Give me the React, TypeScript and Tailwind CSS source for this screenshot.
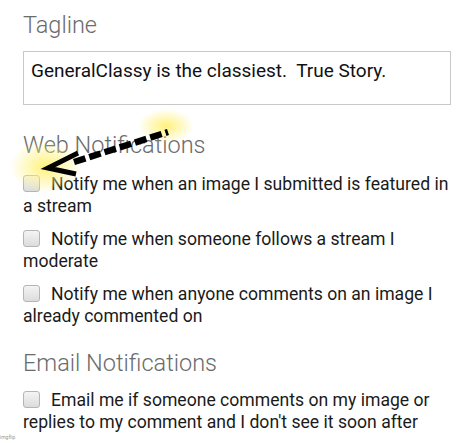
const Checkbox = () => (
    <span className="inline-block align-[-2px] w-[17px] h-[17px] mr-[11px] rounded-[3px] border border-[#b5b5b5] bg-gradient-to-b from-[#f4f4f4] to-[#dcdcdc]"></span>
);

const Option = ({ text }: { text: string }) => (
    <p className="text-[17.6px] leading-[22px] text-[#1a1a1a]">
        <Checkbox />
        {text}
    </p>
);

const Arrow = () => (
    <svg className="absolute left-0 top-0 pointer-events-none" width="474" height="443">
        <defs>
            <radialGradient id="glow">
                <stop offset="0%" stopColor="#fff06a" stopOpacity="0.9" />
                <stop offset="60%" stopColor="#fff27a" stopOpacity="0.4" />
                <stop offset="100%" stopColor="#fff27a" stopOpacity="0" />
            </radialGradient>
        </defs>
        <ellipse cx="46" cy="167" rx="36" ry="26" fill="url(#glow)" />
        <ellipse cx="166" cy="126" rx="28" ry="17" fill="url(#glow)" />
        <line x1="74" y1="162" x2="168" y2="132" stroke="#000" strokeWidth="6.5" strokeDasharray="12 4" />
        <polyline points="78,153 48,168 76,174" fill="none" stroke="#000" strokeWidth="5" strokeLinejoin="miter" />
    </svg>
);

export default function App() {
    return (
        <div className="relative w-[474px] h-[443px] bg-white overflow-hidden font-['Roboto',sans-serif]">
            <div className="px-[23px] pt-[9px]">
                <h2 className="text-[23.5px] leading-[32px] font-light text-[#6b6b6b]">Tagline</h2>
                <div className="mt-[10px] h-[54px] border border-[#c8c8c8] px-[7px] pt-[5px] text-[19px] text-[#111]">
                    GeneralClassy is the classiest.&nbsp; True Story.
                </div>
                <h2 className="mt-[24px] text-[23.5px] leading-[32px] font-light text-[#6b6b6b]">Web Notifications</h2>
                <div className="mt-[12px] flex flex-col gap-[11px]">
                    <Option text="Notify me when an image I submitted is featured in a stream" />
                    <Option text="Notify me when someone follows a stream I moderate" />
                    <Option text="Notify me when anyone comments on an image I already commented on" />
                </div>
                <h2 className="mt-[20px] text-[23.5px] leading-[32px] font-light text-[#6b6b6b]">Email Notifications</h2>
                <div className="mt-[10px]">
                    <Option text="Email me if someone comments on my image or replies to my comment and I don't see it soon after" />
                </div>
            </div>
            <span className="absolute left-0 bottom-[2px] text-[5px] text-[#999]">imgflip</span>
            <Arrow />
        </div>
    );
}
